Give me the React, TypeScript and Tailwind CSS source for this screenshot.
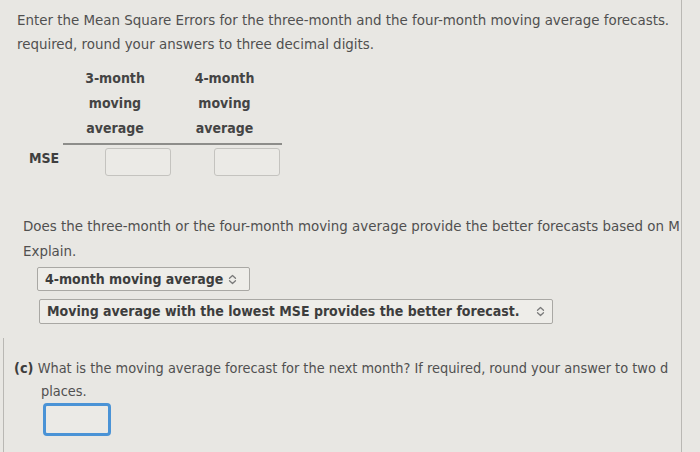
import React from 'react';

const Chevron = () => (
  <svg width="9" height="11" viewBox="0 0 9 11" fill="none" className="shrink-0">
    <path d="M1.5 4.2 L4.5 1.5 L7.5 4.2" stroke="#7a7a7a" strokeWidth="1.3" strokeLinecap="round" strokeLinejoin="round" />
    <path d="M1.5 6.8 L4.5 9.5 L7.5 6.8" stroke="#7a7a7a" strokeWidth="1.3" strokeLinecap="round" strokeLinejoin="round" />
  </svg>
);

const App = () => {
  return (
    <div className="w-[700px] h-[452px] overflow-hidden bg-[#e8e7e3] text-[#505050] font-['DejaVu_Sans','Verdana',sans-serif] [font-stretch:condensed] text-[14px]">
      <div className="w-[682px] h-full border-r border-[#b9b8b4]">
        {/* part b: MSE table */}
        <div className="pl-[17px] pt-[8px] leading-[24px] text-[14.9px]">
          <p className="whitespace-nowrap">Enter the Mean Square Errors for the three-month and the four-month moving average forecasts.</p>
          <p>required, round your answers to three decimal digits.</p>
        </div>

        <div className="flex mt-[10px]">
          <div className="w-[63px] shrink-0 flex flex-col">
            <div className="h-[77px]" />
            <p className="pl-[29px] font-bold text-[#3f3f3f] leading-[30px]">MSE</p>
          </div>
          <div className="flex flex-col">
            <div className="flex w-[219px] border-b-2 border-[#8d8d8a] pb-[2px] font-bold text-[#444] leading-[25px] text-center">
              <div className="w-[104px]">
                <p>3-month</p>
                <p>moving</p>
                <p>average</p>
              </div>
              <div className="w-[115px]">
                <p>4-month</p>
                <p>moving</p>
                <p>average</p>
              </div>
            </div>
            <div className="flex gap-[43px] pl-[42px] pt-[3px]">
              <div className="w-[66px] h-[28px] border border-[#c4c3bf] rounded-[3px] bg-[#ebeae6]" />
              <div className="w-[66px] h-[28px] border border-[#c4c3bf] rounded-[3px] bg-[#ebeae6]" />
            </div>
          </div>
        </div>

        {/* better forecast */}
        <div className="pl-[23px] mt-[38px] leading-[25px] text-[14.9px]">
          <p className="whitespace-nowrap">Does the three-month or the four-month moving average provide the better forecasts based on M</p>
          <p>Explain.</p>
        </div>
        <div className="pl-[37px] mt-[3px] flex flex-col items-start gap-[8px] font-bold text-[#3d3d3d]">
          <div className="flex items-center gap-[5px] h-[24px] w-[213px] pl-[7px] pr-[4px] border border-[#a9a8a4] rounded-[2px] bg-[#eeede9]">
            <span className="whitespace-nowrap">4-month moving average</span>
            <Chevron />
          </div>
          <div className="flex items-center justify-between ml-[2px] h-[25px] w-[514px] pl-[7px] pr-[7px] border border-[#a9a8a4] rounded-[2px] bg-[#eeede9]">
            <span className="whitespace-nowrap">Moving average with the lowest MSE provides the better forecast.</span>
            <Chevron />
          </div>
        </div>

        {/* part c */}
        <div className="mt-[14px] ml-[3px] h-[200px] border-l border-[#b9b8b4] pt-[19px] leading-[23px] text-[14.4px]">
          <p className="pl-[10px] whitespace-nowrap">
            <span className="font-bold text-[#3d3d3d]">(c)</span>{' '}What is the moving average forecast for the next month? If required, round your answer to two d
          </p>
          <p className="pl-[37px]">places.</p>
          <div className="ml-[39px] w-[68px] h-[33px] border-[3px] border-[#4a93d6] rounded-[4px] bg-[#ebeae6]" />
        </div>
      </div>
    </div>
  );
};

export default App;
